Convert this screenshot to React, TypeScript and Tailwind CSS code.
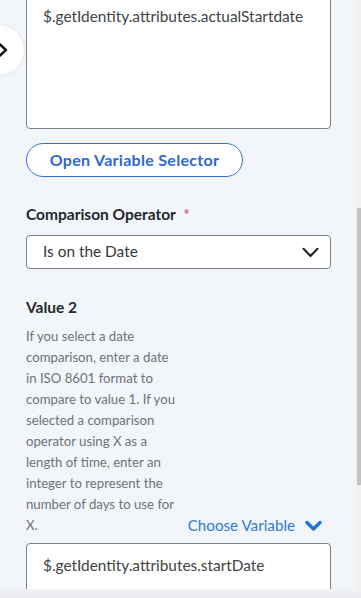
import React from "react";

const font = { fontFamily: "Lato, 'Noto Sans', sans-serif" };

export default function App() {
  const desc = [
    "If you select a date",
    "comparison, enter a date",
    "in ISO 8601 format to",
    "compare to value 1. If you",
    "selected a comparison",
    "operator using X as a",
    "length of time, enter an",
    "integer to represent the",
    "number of days to use for",
    "X.",
  ];

  return (
    <div
      className="relative w-[361px] h-[598px] overflow-hidden bg-[#f2f5f9]"
      style={font}
    >
      {/* collapse handle on the left */}
      <div className="absolute left-[-26px] top-[25px] w-[50px] h-[50px] rounded-full bg-white shadow-[0_0_3px_rgba(0,0,0,0.12)] flex items-center justify-end pr-[16px]">
        <svg width="10" height="14" viewBox="0 0 10 14" fill="none">
          <path d="M2 1.5 L8 7 L2 12.5" stroke="#111" strokeWidth="2.4" strokeLinecap="round" strokeLinejoin="round" />
        </svg>
      </div>

      {/* scrollbar */}
      <div className="absolute right-0 top-0 w-[6px] h-full bg-[#f1f1f1]">
        <div className="mt-[208px] ml-[2px] w-[4px] h-[277px] bg-[#c1c1c1]" />
      </div>

      <div className="flex flex-col pl-[26px] w-[331px]">
        <div className="mt-[-10px] h-[139px] bg-white border border-[#7d8287] rounded-[4px] px-[16px] pt-[15px] text-[15.4px] leading-[20px] text-[#404347]">
          $.getIdentity.attributes.actualStartdate
        </div>

        <button className="mt-[14px] w-[217px] h-[34px] rounded-full border border-[#3b6fd8] bg-white text-[16px] font-bold text-[#2d68d6] tracking-[0.3px]">
          Open Variable Selector
        </button>

        <div className="mt-[27px] h-[20px] leading-[20px] text-[15.5px] font-bold text-[#24282c]">
          Comparison Operator <span className="ml-[4px] text-[#e3326a] font-normal">*</span>
        </div>

        <div className="mt-[11px] h-[34px] bg-white border border-[#7d8287] rounded-[4px] flex items-center justify-between pl-[16px] pr-[11px] text-[15.4px] text-[#34373b]">
          <span>Is on the Date</span>
          <svg width="17" height="11" viewBox="0 0 17 11" fill="none">
            <path d="M1.5 1.8 L8.5 9 L15.5 1.8" stroke="#1c1e21" strokeWidth="2" strokeLinecap="round" strokeLinejoin="round" />
          </svg>
        </div>

        <div className="mt-[28px] h-[20px] leading-[20px] text-[15.5px] font-bold text-[#24282c]">
          Value 2
        </div>

        <div className="mt-[9px] flex items-end justify-between">
          <div className="text-[13.2px] leading-[21px] text-[#6e7379]">
            {desc.map((l) => (
              <div key={l}>{l}</div>
            ))}
          </div>
          <div className="flex items-center gap-[10px] pr-[9px] h-[21px] text-[15.2px] text-[#2f7bd0]">
            <span>Choose Variable</span>
            <svg width="17" height="12" viewBox="0 0 17 12" fill="none">
              <path d="M2 2.5 L8.5 9 L15 2.5" stroke="#1d74d3" strokeWidth="3.4" strokeLinecap="round" strokeLinejoin="round" />
            </svg>
          </div>
        </div>

        <div className="mt-[7px] h-[100px] bg-white border border-[#7d8287] rounded-[4px] px-[16px] pt-[11px] text-[15.4px] leading-[20px] text-[#404347]">
          $.getIdentity.attributes.startDate
        </div>
      </div>

      {/* bottom shade */}
      <div className="absolute left-0 bottom-0 w-full h-[9px] bg-gradient-to-b from-[#f3f4f6] to-[#e7e9ec]" />
    </div>
  );
}
